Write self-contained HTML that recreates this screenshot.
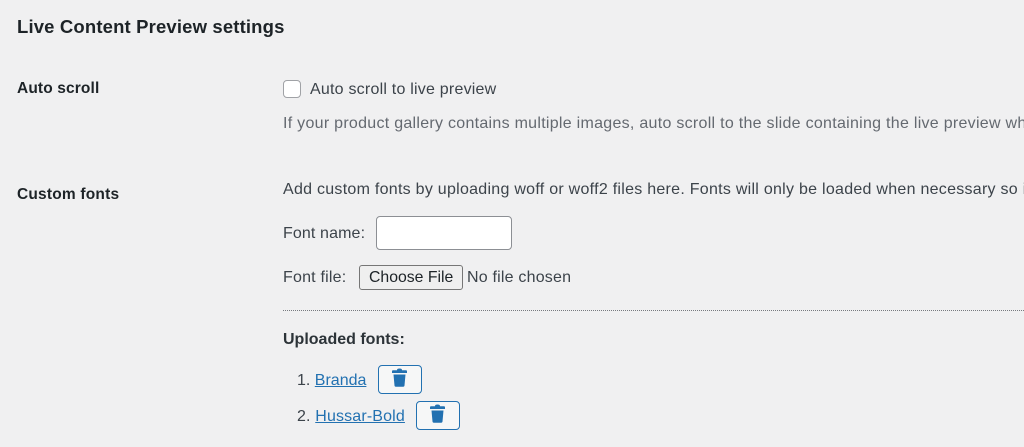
<!DOCTYPE html>
<html><head><meta charset="utf-8"><style>
html,body{margin:0;padding:0;width:1024px;height:447px;overflow:hidden;background:#f0f0f1}
body{position:relative;font-family:"Liberation Sans",sans-serif;color:#3c434a}
.t{position:absolute;white-space:nowrap;font-size:16px;line-height:20px;letter-spacing:.2px}
.clip{width:741px;overflow:hidden}
.b{font-weight:bold;color:#1d2327}
.box{position:absolute;box-sizing:border-box}
.tb{position:absolute;box-sizing:border-box;background:#f6f7f7;border:1px solid #2271b1;border-radius:4px;width:44px;height:29px}
.tb svg{position:absolute;left:12px;top:2px}
a{color:#2271b1;text-decoration:underline}
</style></head><body>
<div class="t b" style="left:17px;top:17px;font-size:18.5px;letter-spacing:.15px">Live Content Preview settings</div>
<div class="t b" style="left:17px;top:79px;font-size:15.5px;letter-spacing:.13px">Auto scroll</div>
<div class="box" style="left:283px;top:80px;width:18px;height:18px;background:#fff;border:1px solid #a0a2a6;border-radius:4px"></div>
<div class="t" style="left:310px;top:80px;letter-spacing:.22px">Auto scroll to live preview</div>
<div class="t clip" style="left:283px;top:114px;color:#646970;letter-spacing:.28px">If your product gallery contains multiple images, auto scroll to the slide containing the live preview when it is changed</div>
<div class="t b" style="left:17px;top:185px;font-size:15.5px;letter-spacing:.2px">Custom fonts</div>
<div class="t clip" style="left:283px;top:180px;letter-spacing:.27px">Add custom fonts by uploading woff or woff2 files here. Fonts will only be loaded when necessary so it will not slow</div>
<div class="t" style="left:283px;top:224px;letter-spacing:.12px">Font name:</div>
<div class="box" style="left:376px;top:216px;width:136px;height:34px;background:#fff;border:1px solid #8c8f94;border-radius:4px"></div>
<div class="t" style="left:283px;top:268px">Font file:</div>
<div class="box" style="left:359px;top:265px;width:104px;height:25px;background:#efefef;border:1px solid #767676;border-radius:3px"></div>
<div class="t" style="left:369px;top:268px;color:#1d2327;letter-spacing:0;font-size:15.8px">Choose File</div>
<div class="t" style="left:467px;top:268px">No file chosen</div>
<div class="box" style="left:283px;top:310px;width:741px;height:0;border-top:1px dotted #777a7f"></div>
<div class="t b" style="left:283px;top:330px;color:#2c3338;letter-spacing:0">Uploaded fonts:</div>
<div class="t" style="left:297px;top:371px;letter-spacing:0">1. <a>Branda</a></div>
<div class="tb" style="left:378px;top:365px"><svg width="18" height="20" viewBox="0 0 18 20"><path fill="#2271b1" d="M6 2.200C6 1 6.800.5 8.500.5S11 1 11 2.200H15C15.800 2.200 16 2.700 16 3.500V5H1V3.500C1 2.700 1.200 2.200 2 2.200ZM2.500 6.500H14.500L13.500 17.500C13.400 18.300 13 18.700 12.200 18.700H4.800C4 18.700 3.600 18.300 3.500 17.500Z"/></svg></div>
<div class="t" style="left:297px;top:407px;letter-spacing:.15px">2. <a>Hussar-Bold</a></div>
<div class="tb" style="left:416px;top:401px"><svg width="18" height="20" viewBox="0 0 18 20"><path fill="#2271b1" d="M6 2.200C6 1 6.800.5 8.500.5S11 1 11 2.200H15C15.800 2.200 16 2.700 16 3.500V5H1V3.500C1 2.700 1.200 2.200 2 2.200ZM2.500 6.500H14.500L13.500 17.500C13.400 18.300 13 18.700 12.200 18.700H4.800C4 18.700 3.600 18.300 3.500 17.500Z"/></svg></div>
</body></html>
